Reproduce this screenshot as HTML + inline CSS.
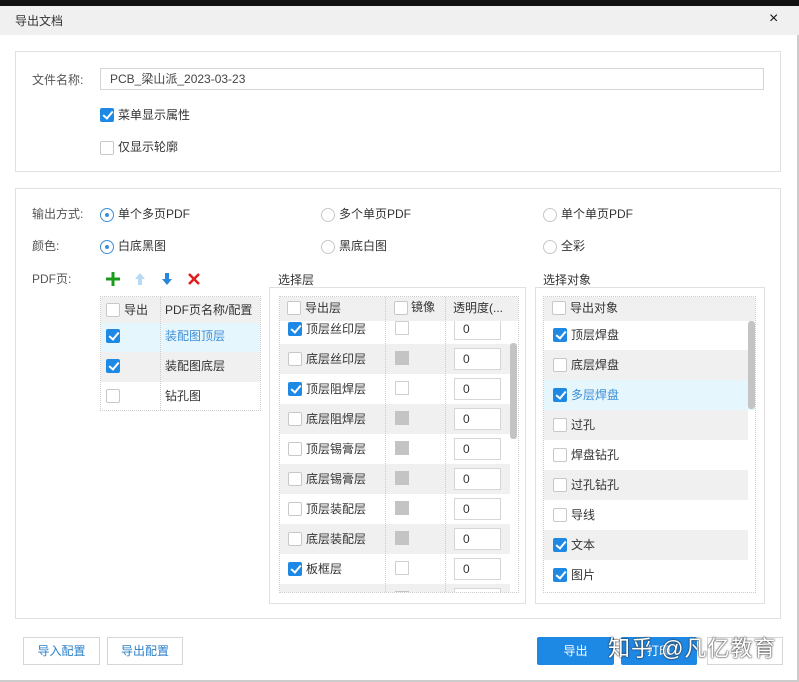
<!DOCTYPE html>
<html><head><meta charset="utf-8">
<style>
*{margin:0;padding:0;box-sizing:border-box}
body{width:799px;height:682px;overflow:hidden;background:#fff;font-family:"Liberation Sans","Noto Sans CJK SC",sans-serif;font-size:12px;color:#333;position:relative}
.a{position:absolute}
.t{position:absolute;line-height:14px;white-space:nowrap}
.cb{position:absolute;width:14px;height:14px;border:1px solid #c8c8c8;background:#fff;border-radius:2px}
.cb.on{background:#1e88e5;border-color:#1e88e5}
.cb.on::after{content:"";position:absolute;left:4px;top:0px;width:4px;height:8px;border:solid #fff;border-width:0 2px 2px 0;transform:rotate(40deg)}
.rd{position:absolute;width:14px;height:14px;border:1px solid #c8c8c8;border-radius:50%;background:#fff}
.rd.on{border-color:#3d8fd6}
.rd.on::after{content:"";position:absolute;left:4px;top:4px;width:4px;height:4px;border-radius:50%;background:#3d8fd6}
.mb{position:absolute;width:14px;height:14px;border:1px solid #d0d0d0;background:#fff}
.mb.g{background:#c4c4c4;border-color:#c4c4c4}
.in{position:absolute;width:47px;height:22px;border:1px solid #d6d6d6;background:#fff;padding-left:8px;line-height:20px;font-size:12px}
.btn{position:absolute;height:28px;border:1px solid #d6d6d6;background:#fff;color:#2a7fc9;text-align:center;line-height:26px}
.bb{position:absolute;height:28px;background:#1e88e5;color:#fff;text-align:center;line-height:28px;border-radius:2px}
</style></head><body>
<div class="a" style="left:0;top:0;width:799px;height:6px;background:#111"></div>
<div class="a" style="left:0;top:6px;width:799px;height:29px;background:#f0f0f0"></div>
<div class="t" style="left:15px;top:14px;font-size:12px;color:#333">导出文档</div>
<div class="t" style="left:769px;top:12px;font-size:16px;color:#111">×</div>
<div class="a" style="left:797px;top:35px;width:2px;height:647px;background:#ccc"></div>
<div class="a" style="left:0;top:680px;width:799px;height:2px;background:#ccc"></div>

<div class="a" style="left:15px;top:51px;width:766px;height:121px;border:1px solid #e0e0e0"></div>
<div class="t" style="left:32px;top:73px;color:#555">文件名称:</div>
<div class="a" style="left:100px;top:68px;width:664px;height:22px;border:1px solid #d6d6d6;padding-left:9px;line-height:20px;color:#444">PCB_梁山派_2023-03-23</div>
<div class="cb on" style="left:100px;top:108px"></div>
<div class="t" style="left:118px;top:108px">菜单显示属性</div>
<div class="cb" style="left:100px;top:141px"></div>
<div class="t" style="left:118px;top:140px">仅显示轮廓</div>

<div class="a" style="left:15px;top:188px;width:766px;height:431px;border:1px solid #e0e0e0"></div>
<div class="t" style="left:32px;top:207px;color:#555">输出方式:</div>
<div class="rd on" style="left:100px;top:208px"></div><div class="t" style="left:118px;top:207px">单个多页PDF</div>
<div class="rd" style="left:321px;top:208px"></div><div class="t" style="left:339px;top:207px">多个单页PDF</div>
<div class="rd" style="left:543px;top:208px"></div><div class="t" style="left:561px;top:207px">单个单页PDF</div>
<div class="t" style="left:32px;top:239px;color:#555">颜色:</div>
<div class="rd on" style="left:100px;top:240px"></div><div class="t" style="left:118px;top:239px">白底黑图</div>
<div class="rd" style="left:321px;top:240px"></div><div class="t" style="left:339px;top:239px">黑底白图</div>
<div class="rd" style="left:543px;top:240px"></div><div class="t" style="left:561px;top:239px">全彩</div>

<div class="t" style="left:32px;top:272px;color:#555">PDF页:</div>
<svg class="a" style="left:104px;top:271px" width="110" height="16">
<path d="M9 1V15M2 8H16" stroke="#1a9c1a" stroke-width="3"/>
<path d="M36 2L31 8H34V14H38V8H41Z" fill="#b8daf5"/>
<path d="M63 14L58 8H61V2H65V8H68Z" fill="#2a86d8"/>
<path d="M85 3L95 13M95 3L85 13" stroke="#e02020" stroke-width="2.6"/>
</svg>

<div class="a" style="left:100px;top:296px;width:161px;height:115px;border:1px dotted #ccc;overflow:hidden">
 <div class="a" style="left:0;top:0;width:161px;height:26px;background:#f0f0f0"></div>
 <div class="a" style="left:0;top:26px;width:161px;height:29px;background:#e6f6fd"></div>
 <div class="a" style="left:0;top:55px;width:161px;height:30px;background:#f0f0f0"></div>
 <div class="a" style="left:59px;top:0;width:0;height:115px;border-left:1px dotted #ccc"></div>
</div>
<div class="cb" style="left:106px;top:303px"></div><div class="t" style="left:124px;top:303px">导出</div>
<div class="t" style="left:165px;top:303px">PDF页名称/配置</div>
<div class="cb on" style="left:106px;top:329px"></div><div class="t" style="left:165px;top:329px;color:#3d8fd6">装配图顶层</div>
<div class="cb on" style="left:106px;top:359px"></div><div class="t" style="left:165px;top:359px">装配图底层</div>
<div class="cb" style="left:106px;top:389px"></div><div class="t" style="left:165px;top:389px">钻孔图</div>

<div class="a" style="left:269px;top:287px;width:257px;height:317px;border:1px solid #e0e0e0"></div>
<div class="t" style="left:278px;top:273px;background:#fff;padding-right:2px">选择层</div>
<div class="a" style="left:279px;top:296px;width:240px;height:297px;border:1px dotted #ccc;overflow:hidden">
 <div class="a" style="left:0;top:0;width:240px;height:24px;background:#f0f0f0"></div>
 <div class="a" style="left:0;top:24px;width:240px;height:272px;overflow:hidden" id="L"></div>
 <div class="a" style="left:105px;top:0;height:297px;border-left:1px dotted #ccc"></div>
 <div class="a" style="left:165px;top:0;height:297px;border-left:1px dotted #ccc"></div>
 <div class="a" style="left:230px;top:46px;width:7px;height:96px;background:#c4c4c4;border-radius:3px"></div>
</div>
<div class="cb" style="left:287px;top:301px"></div><div class="t" style="left:305px;top:301px">导出层</div>
<div class="cb" style="left:394px;top:301px"></div><div class="t" style="left:411px;top:300px">镜像</div>
<div class="t" style="left:453px;top:301px">透明度(...</div>

<div class="a" style="left:535px;top:287px;width:230px;height:317px;border:1px solid #e0e0e0"></div>
<div class="t" style="left:543px;top:273px;background:#fff;padding-right:2px">选择对象</div>
<div class="a" style="left:543px;top:296px;width:213px;height:297px;border:1px dotted #ccc;overflow:hidden">
 <div class="a" style="left:0;top:0;width:213px;height:24px;background:#f0f0f0"></div>
 <div class="a" style="left:0;top:24px;width:213px;height:272px;overflow:hidden" id="O"></div>
 <div class="a" style="left:204px;top:24px;width:7px;height:88px;background:#c4c4c4;border-radius:3px"></div>
</div>
<div class="cb" style="left:552px;top:301px"></div><div class="t" style="left:570px;top:301px">导出对象</div>

<div class="btn" style="left:23px;top:637px;width:77px">导入配置</div>
<div class="btn" style="left:107px;top:637px;width:76px">导出配置</div>
<div class="bb" style="left:537px;top:637px;width:77px">导出</div>
<div class="bb" style="left:621px;top:637px;width:76px">打印</div>
<div class="a" style="left:707px;top:637px;width:76px;height:28px;border:1px solid #d6d6d6;background:#fff"></div>
<div class="t" style="left:608px;top:636px;font-size:22px;line-height:26px;color:#fff;text-shadow:0 0 2px #333,0 0 1px #000;letter-spacing:1px">知乎 @凡亿教育</div>

<script>
var L=document.getElementById('L'),h='';
var ln=['顶层丝印层','底层丝印层','顶层阻焊层','底层阻焊层','顶层锡膏层','底层锡膏层','顶层装配层','底层装配层','板框层',''];
var lc=[1,0,1,0,0,0,0,0,1,0];
for(var i=0;i<10;i++){var y=-7+30*i;
h+='<div class="a" style="left:0;top:'+y+'px;width:230px;height:30px;background:'+(i%2?'#f0f0f0':'#fff')+'"></div>';
h+='<div class="cb'+(lc[i]?' on':'')+'" style="left:8px;top:'+(y+8)+'px"></div>';
h+='<div class="t" style="left:26px;top:'+(y+8)+'px">'+ln[i]+'</div>';
h+='<div class="mb'+(lc[i]?'':' g')+'" style="left:115px;top:'+(y+7)+'px"></div>';
h+='<div class="in" style="left:174px;top:'+(y+4)+'px">0</div>';}
L.innerHTML=h;
var O=document.getElementById('O');h='';
var on=['顶层焊盘','底层焊盘','多层焊盘','过孔','焊盘钻孔','过孔钻孔','导线','文本','图片'];
var oc=[1,0,1,0,0,0,0,1,1];
var bg=['#fff','#f0f0f0','#e6f6fd','#f0f0f0','#fff','#f0f0f0','#fff','#f0f0f0','#fff'];
for(var i=0;i<9;i++){var y=-1+30*i;
h+='<div class="a" style="left:0;top:'+y+'px;width:'+(i==2?213:204)+'px;height:30px;background:'+bg[i]+'"></div>';
h+='<div class="cb'+(oc[i]?' on':'')+'" style="left:9px;top:'+(y+8)+'px"></div>';
h+='<div class="t" style="left:27px;top:'+(y+8)+'px;'+(i==2?'color:#3d8fd6':'')+'">'+on[i]+'</div>';}
O.innerHTML=h;
</script>
</body></html>
